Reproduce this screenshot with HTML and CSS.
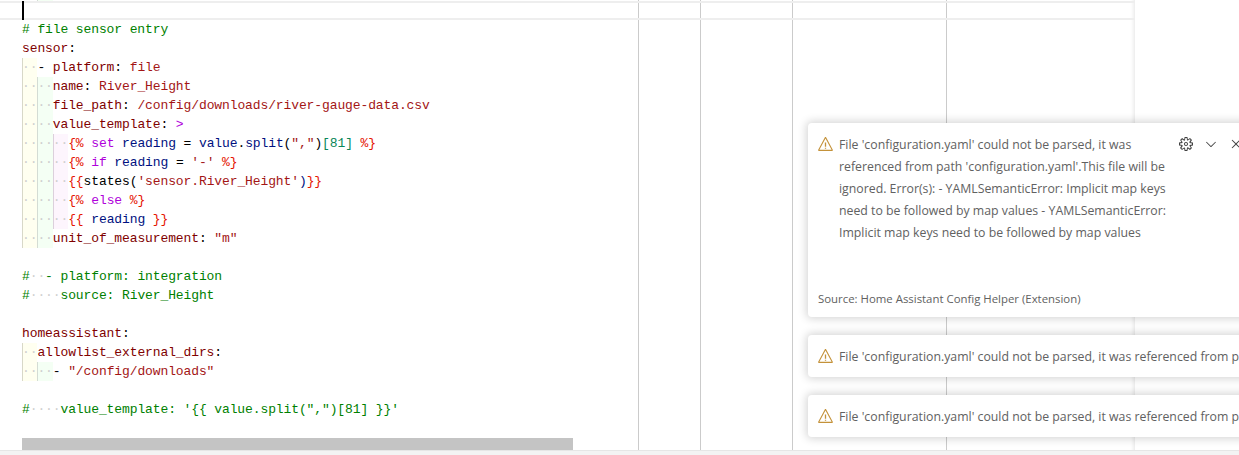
FILE: index.html
```html
<!DOCTYPE html>
<html lang="en">
<head>
<meta charset="utf-8">
<title>configuration.yaml</title>
<link rel="stylesheet" href="styles.css">
</head>
<body>
<div class="workbench">
  <main class="editor">
    <div class="ruler r1"></div><div class="ruler r2"></div><div class="ruler r3"></div><div class="ruler r4"></div>
    <div class="current-line"><span class="cursor"></span></div>
    <div class="code">
      <div class="line c"># file sensor entry</div>
      <div class="line"><span class="k">sensor</span><span class="p">:</span></div>
      <div class="line"><span class="i1">··</span><span class="p">- </span><span class="k">platform</span><span class="p">: </span><span class="s">file</span></div>
      <div class="line"><span class="i1">··</span><span class="i2">··</span><span class="k">name</span><span class="p">: </span><span class="s">River_Height</span></div>
      <div class="line"><span class="i1">··</span><span class="i2">··</span><span class="k">file_path</span><span class="p">: </span><span class="s">/config/downloads/river-gauge-data.csv</span></div>
      <div class="line"><span class="i1">··</span><span class="i2">··</span><span class="k">value_template</span><span class="p">: </span><span class="m">&gt;</span></div>
      <div class="line"><span class="i1">··</span><span class="i2">··</span><span class="i3">··</span><span class="b">{%</span> <span class="m">set</span> <span class="v">reading</span> = <span class="v">value</span>.<span class="v">split</span>(<span class="s">","</span>)<span class="n">[81]</span> <span class="b">%}</span></div>
      <div class="line"><span class="i1">··</span><span class="i2">··</span><span class="i3">··</span><span class="b">{%</span> <span class="m">if</span> <span class="v">reading</span> = <span class="s">'-'</span> <span class="b">%}</span></div>
      <div class="line"><span class="i1">··</span><span class="i2">··</span><span class="i3">··</span><span class="b">{{</span>states(<span class="s">'sensor.River_Height'</span><span class="v">)</span><span class="b">}}</span></div>
      <div class="line"><span class="i1">··</span><span class="i2">··</span><span class="i3">··</span><span class="b">{%</span> <span class="m">else</span> <span class="b">%}</span></div>
      <div class="line"><span class="i1">··</span><span class="i2">··</span><span class="i3">··</span><span class="b">{{</span> <span class="v">reading</span> <span class="b">}}</span></div>
      <div class="line"><span class="i1">··</span><span class="i2">··</span><span class="k">unit_of_measurement</span><span class="p">: </span><span class="s">"m"</span></div>
      <div class="line"></div>
      <div class="line c">#<span class="w">··</span>- platform: integration</div>
      <div class="line c">#<span class="w">····</span>source: River_Height</div>
      <div class="line"></div>
      <div class="line"><span class="k">homeassistant</span><span class="p">:</span></div>
      <div class="line"><span class="i1">··</span><span class="k">allowlist_external_dirs</span><span class="p">:</span></div>
      <div class="line"><span class="i1">··</span><span class="i2">··</span><span class="p">- </span><span class="s">"/config/downloads"</span></div>
      <div class="line"></div>
      <div class="line c">#<span class="w">····</span>value_template: '{{ value.split(",")[81] }}'</div>
    </div>
    <div class="hscroll"><div class="hthumb"></div></div>
  </main>
  <footer class="statusbar"></footer>
</div>

<aside class="toasts">
  <section class="toast toast-big">
    <div class="toast-main">
      <svg class="ico warn" viewBox="0 0 16 16"><path d="M7.56 1h.88l6.54 12.26-.44.74H1.44L1 13.26 7.56 1zM8 2.28L2.28 13H13.7L8 2.28zM8.625 12v-1h-1.25v1h1.25zm-1.25-2V6h1.25v4h-1.25z"/></svg>
      <p class="msg">File 'configuration.yaml' could not be parsed, it was referenced from path 'configuration.yaml'.This file will be ignored. Error(s): - YAMLSemanticError: Implicit map keys need to be followed by map values - YAMLSemanticError: Implicit map keys need to be followed by map values</p>
      <div class="actions">
        <svg class="ico act" viewBox="0 0 16 16"><path d="M9.1 4.4L8.6 2H7.4l-.5 2.4-.7.3-2-1.3-.9.8 1.3 2-.2.7-2.4.5v1.2l2.4.5.3.8-1.3 2 .8.8 2-1.3.8.3.4 2.3h1.2l.5-2.4.8-.3 2 1.3.8-.8-1.3-2 .3-.8 2.3-.4V7.4l-2.4-.5-.3-.8 1.3-2-.8-.8-2 1.3-.7-.2zM9.4 1l.5 2.4L12 2.1l2 2-1.4 2.1 2.4.4v2.8l-2.4.5L14 12l-2 2-2.1-1.4-.5 2.4H6.6l-.5-2.4L4 13.9l-2-2 1.4-2.1L1 9.4V6.6l2.4-.5L2.1 4l2-2 2.1 1.4.4-2.4h2.8zm.6 7c0 1.1-.9 2-2 2s-2-.9-2-2 .9-2 2-2 2 .9 2 2zM8 9c.6 0 1-.4 1-1s-.4-1-1-1-1 .4-1 1 .4 1 1 1z"/></svg>
        <svg class="ico act" viewBox="0 0 16 16"><path d="M7.976 10.072l4.357-4.357.62.618L8.284 11h-.618L3 6.333l.619-.618 4.357 4.357z"/></svg>
        <svg class="ico act" viewBox="0 0 16 16"><path d="M8 8.707l3.646 3.647.708-.707L8.707 8l3.647-3.646-.707-.708L8 7.293 4.354 3.646l-.707.708L7.293 8l-3.646 3.646.707.708L8 8.707z"/></svg>
      </div>
    </div>
    <div class="source">Source: Home Assistant Config Helper (Extension)</div>
  </section>
  <section class="toast toast-small">
    <svg class="ico warn" viewBox="0 0 16 16"><path d="M7.56 1h.88l6.54 12.26-.44.74H1.44L1 13.26 7.56 1zM8 2.28L2.28 13H13.7L8 2.28zM8.625 12v-1h-1.25v1h1.25zm-1.25-2V6h1.25v4h-1.25z"/></svg>
    <span class="msg-line">File 'configuration.yaml' could not be parsed, it was referenced from path 'configuration.yaml'.This file will be ignored.</span>
  </section>
  <section class="toast toast-small">
    <svg class="ico warn" viewBox="0 0 16 16"><path d="M7.56 1h.88l6.54 12.26-.44.74H1.44L1 13.26 7.56 1zM8 2.28L2.28 13H13.7L8 2.28zM8.625 12v-1h-1.25v1h1.25zm-1.25-2V6h1.25v4h-1.25z"/></svg>
    <span class="msg-line">File 'configuration.yaml' could not be parsed, it was referenced from path 'configuration.yaml'.This file will be ignored.</span>
  </section>
</aside>
</body>
</html>
```
FILE: styles.css
```css
html, body { margin: 0; padding: 0; height: 100%; background: #fff; overflow: hidden; }
.workbench { display: flex; flex-direction: column; width: 1239px; height: 455px; }
.editor { position: relative; width: 1135px; height: 450px; padding-top: 1px; box-sizing: border-box; background: #fff; box-shadow: inset -5px 0 4px -4px #e4e4e4; }
.editor::before { content: ""; position: absolute; left: 37px; top: 0; width: 16px; height: 1px; background: #f4fff4; box-shadow: inset 1px 0 0 #d4dcd4; }
.statusbar { height: 4px; background: #f3f3f3; border-top: 1px solid #e6e6e6; }
.ruler { position: absolute; top: 0; bottom: 0; width: 1px; background: #cbcbcb; }
.r1 { left: 638px; } .r2 { left: 700px; } .r3 { left: 792px; } .r4 { left: 946px; }
.current-line { height: 15px; border-top: 2px solid #eeeeee; border-bottom: 2px solid #eeeeee; position: relative; }
.cursor { position: absolute; left: 22px; top: -2px; width: 2px; height: 19px; background: #000; }
.code { padding-left: 22px; font: 13px/19px "Liberation Mono", "DejaVu Sans Mono", monospace; letter-spacing: -0.11px; color: #000; position: relative; }
.line { height: 19px; white-space: pre; }
.c { color: #008000; }
.k { color: #800000; }
.p { color: #000; }
.s { color: #a31515; }
.m { color: #af00db; }
.v { color: #001080; }
.n { color: #098658; }
.b { color: #e51400; }
.w { color: #d0d0d0; }
.i1, .i2, .i3 { display: inline-block; height: 19px; color: #cfcfcf; vertical-align: top; }
.i1 { background: #fffff0; box-shadow: inset 1px 0 0 #d8d8c8; }
.i2 { background: #f4fff4; box-shadow: inset 1px 0 0 #d4dcd4; }
.i3 { background: #fdf5fd; box-shadow: inset 1px 0 0 #dcd0dc; }
.hscroll { margin-top: 19px; padding-left: 22px; }
.hthumb { width: 551px; height: 12px; background: #c4c4c4; }
.toasts { position: absolute; left: 808px; top: 123px; width: 450px; display: flex; flex-direction: column; gap: 18px; font: 12.3px/22px "Open Sans", "Noto Sans", sans-serif; color: #616161; }
.toast { background: #fff; border-radius: 4px; box-shadow: 0 0 8px 2px rgba(0,0,0,.16); }
.toast-big { height: 194px; display: flex; flex-direction: column; justify-content: space-between; box-sizing: border-box; padding: 11px 0 9px; }
.toast-main { display: flex; padding-left: 9px; }
.ico { width: 17px; height: 17px; flex: none; }
.warn { fill: #c4923a; margin: 2px 5px 0 0; }
.msg { margin: 0; width: 332px; flex: none; }
.actions { display: flex; gap: 9px; margin-left: 7px; padding-top: 2px; }
.act { fill: #424242; width: 16px; height: 16px; }
.source { padding-left: 10px; font-size: 11.4px; line-height: 18px; }
.toast-small { height: 42px; display: flex; align-items: center; padding-left: 9px; padding-top: 1px; box-sizing: border-box; overflow: hidden; }
.toast-small .warn { margin-top: 0; }
.msg-line { white-space: nowrap; }
```
